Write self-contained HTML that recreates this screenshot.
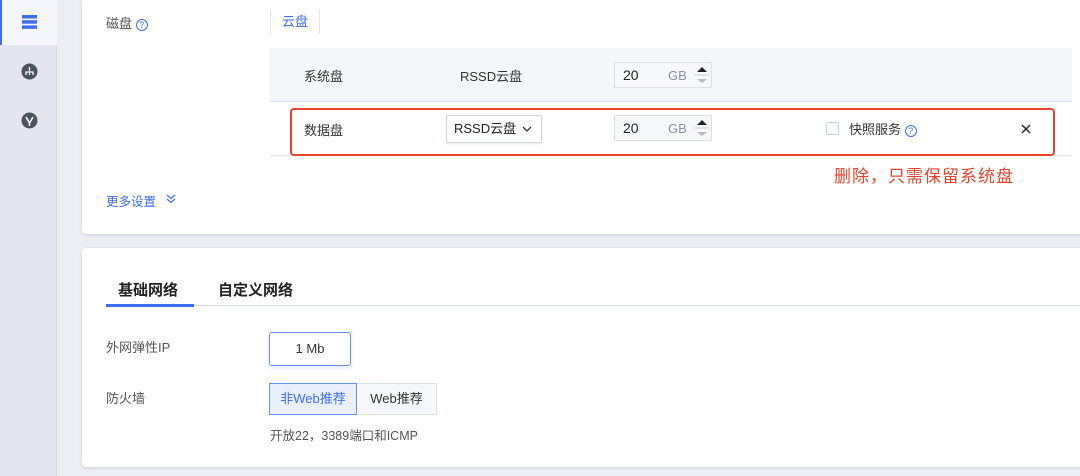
<!DOCTYPE html>
<html><head><meta charset="utf-8"><style>
*{margin:0;padding:0;box-sizing:border-box}
body{width:1080px;height:476px;overflow:hidden;background:#eceef4;font-family:"Liberation Sans","Noto Sans CJK SC",sans-serif;font-size:13px;color:#333;position:relative}
.abs{position:absolute}
.side{left:0;top:0;width:57px;height:476px;background:#e3e5ef;border-right:1px solid #d8dbe6}
.card{background:#fff;border-radius:4px;box-shadow:0 1px 3px rgba(0,0,0,.12)}
.num{width:98px;height:26px;border:1px solid #dcdfe8;background:#f7f8fb;border-radius:2px}
.sp{width:20px;height:26px}
</style></head><body>
<div class="abs side">
  <div class="abs" style="left:0;top:0;width:57px;height:45px;background:#f6f7fc;border-left:2px solid #3f6ef5"></div>
  <svg class="abs" style="left:21px;top:14px" width="17" height="16"><rect x="1" y="1" width="15" height="3.5" fill="#3f6ef5"/><rect x="1" y="6.2" width="15" height="3.5" fill="#3f6ef5"/><rect x="1" y="11.4" width="15" height="3.5" fill="#3f6ef5"/></svg>
  <svg class="abs" style="left:21px;top:63px" width="17" height="17"><circle cx="8.5" cy="8.5" r="8" fill="#4d5260"/><path d="M8.5 4v4M5 12v-3h7v3M8.5 9v3" stroke="#fff" stroke-width="1.3" fill="none"/></svg>
  <svg class="abs" style="left:21px;top:112px" width="17" height="17"><circle cx="8.5" cy="8.5" r="8" fill="#4d5260"/><path d="M5 5l3.5 6 3.5-6M8.5 11v3" stroke="#fff" stroke-width="1.6" fill="none"/></svg>
</div>
<div class="abs card" style="left:82px;top:-6px;width:1010px;height:240px"></div>
<div class="abs" style="left:106px;top:13px;color:#555">磁盘 <span style="display:inline-block;width:12px;height:12px;border:1px solid #3f6ef5;border-radius:50%;color:#3f6ef5;font-size:9px;text-align:center;line-height:10px;vertical-align:0">?</span></div>
<div class="abs" style="left:270px;top:10px;width:50px;height:24px;border-left:1px solid #e3e6ee;border-right:1px solid #e3e6ee;color:#3f6ef5;text-align:center;line-height:24px">云盘</div>
<div class="abs" style="left:270px;top:48px;width:802px;height:54px;background:#f5f6fa;border-bottom:1px solid #dfe2ec"></div>
<div class="abs" style="left:270px;top:155px;width:802px;height:1px;background:#dfe2ec"></div>
<div class="abs" style="left:304px;top:66px">系统盘</div>
<div class="abs" style="left:460px;top:66px">RSSD云盘</div>
<div class="abs num" style="left:614px;top:62px"><span class="abs" style="left:8px;top:4px;font-size:14px;color:#222">20</span><span class="abs" style="left:53px;top:5px;color:#8a93a8">GB</span></div>
<svg class="abs" style="left:692px;top:62px" width="20" height="26"><path d="M5 10l5-5 5 5z" fill="#222"/><path d="M2 13h16" stroke="#ccd" stroke-width="1"/><path d="M5 17l5 4 5-4z" fill="#bbb"/></svg>
<div class="abs" style="left:290px;top:108px;width:765px;height:48px;border:2px solid #e8432e;border-radius:4px"></div>
<div class="abs" style="left:304px;top:120px">数据盘</div>
<div class="abs" style="left:446px;top:115px;width:96px;height:28px;border:1px solid #d3d7e2;background:#fff;box-shadow:0 1px 2px rgba(0,0,0,.1);line-height:26px;padding-left:7px;color:#222">RSSD云盘</div>
<svg class="abs" style="left:522px;top:125px" width="10" height="8"><path d="M1 2l4 4 4-4" stroke="#333" stroke-width="1.3" fill="none"/></svg>
<div class="abs num" style="left:614px;top:115px"><span class="abs" style="left:8px;top:4px;font-size:14px;color:#222">20</span><span class="abs" style="left:53px;top:5px;color:#8a93a8">GB</span></div>
<svg class="abs" style="left:692px;top:115px" width="20" height="26"><path d="M5 10l5-5 5 5z" fill="#222"/><path d="M2 13h16" stroke="#ccd" stroke-width="1"/><path d="M5 17l5 4 5-4z" fill="#bbb"/></svg>
<div class="abs" style="left:826px;top:122px;width:13px;height:13px;border:1px solid #cfd3dd;border-radius:2px"></div>
<div class="abs" style="left:849px;top:119px">快照服务 <span style="display:inline-block;width:12px;height:12px;border:1px solid #3f6ef5;border-radius:50%;color:#3f6ef5;font-size:9px;text-align:center;line-height:10px">?</span></div>
<svg class="abs" style="left:1021px;top:124px" width="10" height="10"><path d="M1 1l8 8M9 1l-8 8" stroke="#222" stroke-width="1.4"/></svg>
<div class="abs" style="left:834px;top:162px;color:#e8432e;font-size:17px;letter-spacing:1px">删除，只需保留系统盘</div>
<div class="abs" style="left:106px;top:191px;color:#3f6ef5;font-size:12.5px">更多设置</div>
<svg class="abs" style="left:166px;top:194px" width="10" height="10"><path d="M1 1l4 3.5 4-3.5M1 5l4 3.5 4-3.5" stroke="#3f6ef5" stroke-width="1.2" fill="none"/></svg>

<div class="abs card" style="left:82px;top:248px;width:1010px;height:219px"></div>
<div class="abs" style="left:106px;top:305px;width:974px;height:1px;background:#d5dbef"></div>
<div class="abs" style="left:106px;top:304px;width:88px;height:3px;background:#3f6ef5"></div>
<div class="abs" style="left:118px;top:279px;font-size:15px;font-weight:bold;color:#222">基础网络</div>
<div class="abs" style="left:218px;top:279px;font-size:15px;font-weight:bold;color:#222">自定义网络</div>
<div class="abs" style="left:106px;top:337px;color:#555">外网弹性IP</div>
<div class="abs" style="left:269px;top:332px;width:82px;height:34px;border:1px solid #6b8ef5;border-radius:3px;text-align:center;line-height:32px;box-shadow:0 2px 5px rgba(60,90,200,.15)">1 Mb</div>
<div class="abs" style="left:106px;top:388px;color:#555">防火墙</div>
<div class="abs" style="left:269px;top:383px;width:88px;height:32px;border:1px solid #6b8ef5;background:#eaeffd;color:#3f6ef5;text-align:center;line-height:30px">非Web推荐</div>
<div class="abs" style="left:357px;top:383px;width:80px;height:32px;border:1px solid #dde1ec;border-left:none;background:#f7f8fb;text-align:center;line-height:30px">Web推荐</div>
<div class="abs" style="left:270px;top:425px;color:#555;font-size:12.5px">开放22，3389端口和ICMP</div>
</body></html>
